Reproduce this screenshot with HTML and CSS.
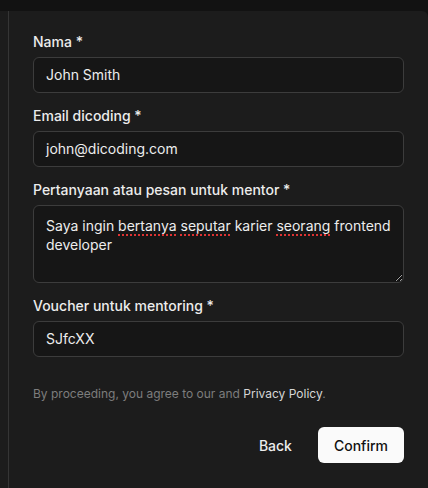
FILE: index.html
```html
<!DOCTYPE html>
<html>
<head>
  <meta name="viewport" content="width=device-width, initial-scale=1">
  <meta charset="UTF-8">
  <link rel="stylesheet" href="styles.css">
</head>
<body>
  <div class="sheet">
    <div class="dialog">
      <form class="form">
        <div class="field">
          <label class="label">Nama *</label>
          <div class="input">John Smith</div>
        </div>
        <div class="field">
          <label class="label">Email dicoding *</label>
          <div class="input">john@dicoding.com</div>
        </div>
        <div class="field">
          <label class="label">Pertanyaan atau pesan untuk mentor *</label>
          <div class="textarea">Saya ingin <span class="typo">bertanya</span> <span class="typo">seputar</span> karier <span class="typo">seorang</span> frontend developer</div>
        </div>
        <div class="field">
          <label class="label">Voucher untuk mentoring *</label>
          <div class="input">SJfcXX</div>
        </div>
        <p class="terms">By proceeding, you agree to our and <a class="terms-link">Privacy Policy</a>.</p>
        <div class="actions">
          <button type="button" class="btn btn-ghost">Back</button>
          <button type="button" class="btn btn-primary">Confirm</button>
        </div>
      </form>
    </div>
  </div>
</body>
</html>
```

FILE: styles.css
```css
html, body {
  height: 100%;
  margin: 0;
  padding: 0;
}

body {
  background-color: #121212;
  font-family: Inter, "Noto Sans", sans-serif;
  color: #ececec;
  overflow: hidden;
}

.sheet {
  margin-top: 11px;
  height: calc(100% - 11px);
  background-color: #1c1c1c;
  border-top-right-radius: 6px;
  padding-left: 8px;
  box-sizing: border-box;
}

.dialog {
  height: 100%;
  border-left: 1px solid #353535;
  padding: 21px 24px 0 24px;
}

.form {
  display: flex;
  flex-direction: column;
  gap: 13px;
}

.field {
  display: flex;
  flex-direction: column;
  gap: 5px;
}

.label {
  font-size: 14px;
  line-height: 20px;
  font-weight: 500;
  color: #ececec;
}

.input,
.textarea {
  box-sizing: border-box;
  border: 1px solid #3c3c3c;
  border-radius: 6px;
  background-color: #161616;
  padding: 0 12px;
  font-size: 14px;
  color: #ededed;
}

.input {
  height: 36px;
  line-height: 34px;
}

.textarea {
  height: 78px;
  padding: 10px 12px 6px 12px;
  line-height: 19px;
  resize: vertical;
  overflow: auto;
}

.typo {
  text-decoration: underline dotted #d33;
  text-decoration-thickness: 1.5px;
  text-underline-offset: 3px;
}

.terms {
  margin: 16px 0 0 0;
  font-size: 12px;
  line-height: 16px;
  color: #7d7d7d;
}

.terms-link {
  color: #d6d6d6;
}

.actions {
  display: flex;
  justify-content: flex-end;
  gap: 10px;
  margin-top: 12px;
}

.btn {
  height: 36px;
  padding: 0 16px;
  border: none;
  border-radius: 6px;
  font-family: inherit;
  font-size: 14px;
  font-weight: 500;
  cursor: pointer;
}

.btn-ghost {
  background: transparent;
  color: #ededed;
}

.btn-primary {
  background-color: #fafafa;
  color: #111111;
}
```
